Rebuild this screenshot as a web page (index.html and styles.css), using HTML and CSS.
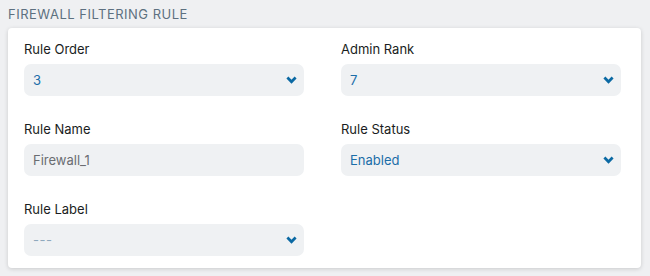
FILE: index.html
```html
<!DOCTYPE html>
<html>
<head>
<meta charset="utf-8">
<link rel="stylesheet" href="styles.css">
</head>
<body>
<div class="page">
  <h2 class="title">Firewall Filtering Rule</h2>
  <div class="card">
    <div class="field">
      <label class="label">Rule Order</label>
      <div class="control select"><span class="value">3</span><svg class="chev" width="11" height="8" viewBox="0 0 11 8"><path d="M1.4 1.6 L5.5 5.7 L9.6 1.6" fill="none" stroke="#0b69a3" stroke-width="2.8"/></svg></div>
    </div>
    <div class="field">
      <label class="label">Admin Rank</label>
      <div class="control select"><span class="value">7</span><svg class="chev" width="11" height="8" viewBox="0 0 11 8"><path d="M1.4 1.6 L5.5 5.7 L9.6 1.6" fill="none" stroke="#0b69a3" stroke-width="2.8"/></svg></div>
    </div>
    <div class="field">
      <label class="label">Rule Name</label>
      <div class="control"><span class="value text">Firewall_1</span></div>
    </div>
    <div class="field">
      <label class="label">Rule Status</label>
      <div class="control select"><span class="value">Enabled</span><svg class="chev" width="11" height="8" viewBox="0 0 11 8"><path d="M1.4 1.6 L5.5 5.7 L9.6 1.6" fill="none" stroke="#0b69a3" stroke-width="2.8"/></svg></div>
    </div>
    <div class="field">
      <label class="label">Rule Label</label>
      <div class="control select"><span class="value placeholder">---</span><svg class="chev" width="11" height="8" viewBox="0 0 11 8"><path d="M1.4 1.6 L5.5 5.7 L9.6 1.6" fill="none" stroke="#0b69a3" stroke-width="2.8"/></svg></div>
    </div>
  </div>
</div>
</body>
</html>
```

FILE: styles.css
```css
* { box-sizing: border-box; }
html, body {
  margin: 0;
  padding: 0;
  background: #eff0f2;
  font-family: Inter, "Noto Sans", "Liberation Sans", sans-serif;
}
.page {
  padding: 4px 9px 8px 8px;
  width: 650px;
}
.title {
  margin: 0;
  font-size: 13px;
  font-weight: 400;
  text-transform: uppercase;
  letter-spacing: 0.5px;
  color: #5d7080;
  line-height: 20px;
  height: 24px;
}
.card {
  background: #ffffff;
  border-radius: 4px;
  box-shadow: 0 1px 4px rgba(0, 0, 0, 0.16);
  padding: 12px 16px 12px 16px;
  display: grid;
  grid-template-columns: 280px 280px;
  column-gap: 37px;
  row-gap: 24px;
}
.field {
  display: flex;
  flex-direction: column;
}
.label {
  font-size: 13px;
  line-height: 18px;
  font-weight: 400;
  color: #1a1d21;
  margin-bottom: 6px;
}
.control {
  height: 32px;
  background: #eff1f3;
  border-radius: 7px;
  display: flex;
  align-items: center;
  justify-content: space-between;
  padding: 0 7px 0 9px;
}
.value {
  font-size: 13px;
  color: #1b6ea8;
}
.value.text {
  color: #6a6d72;
}
.value.placeholder {
  color: #8fa9bd;
  letter-spacing: 0.5px;
}
.chev {
  display: block;
}
```
